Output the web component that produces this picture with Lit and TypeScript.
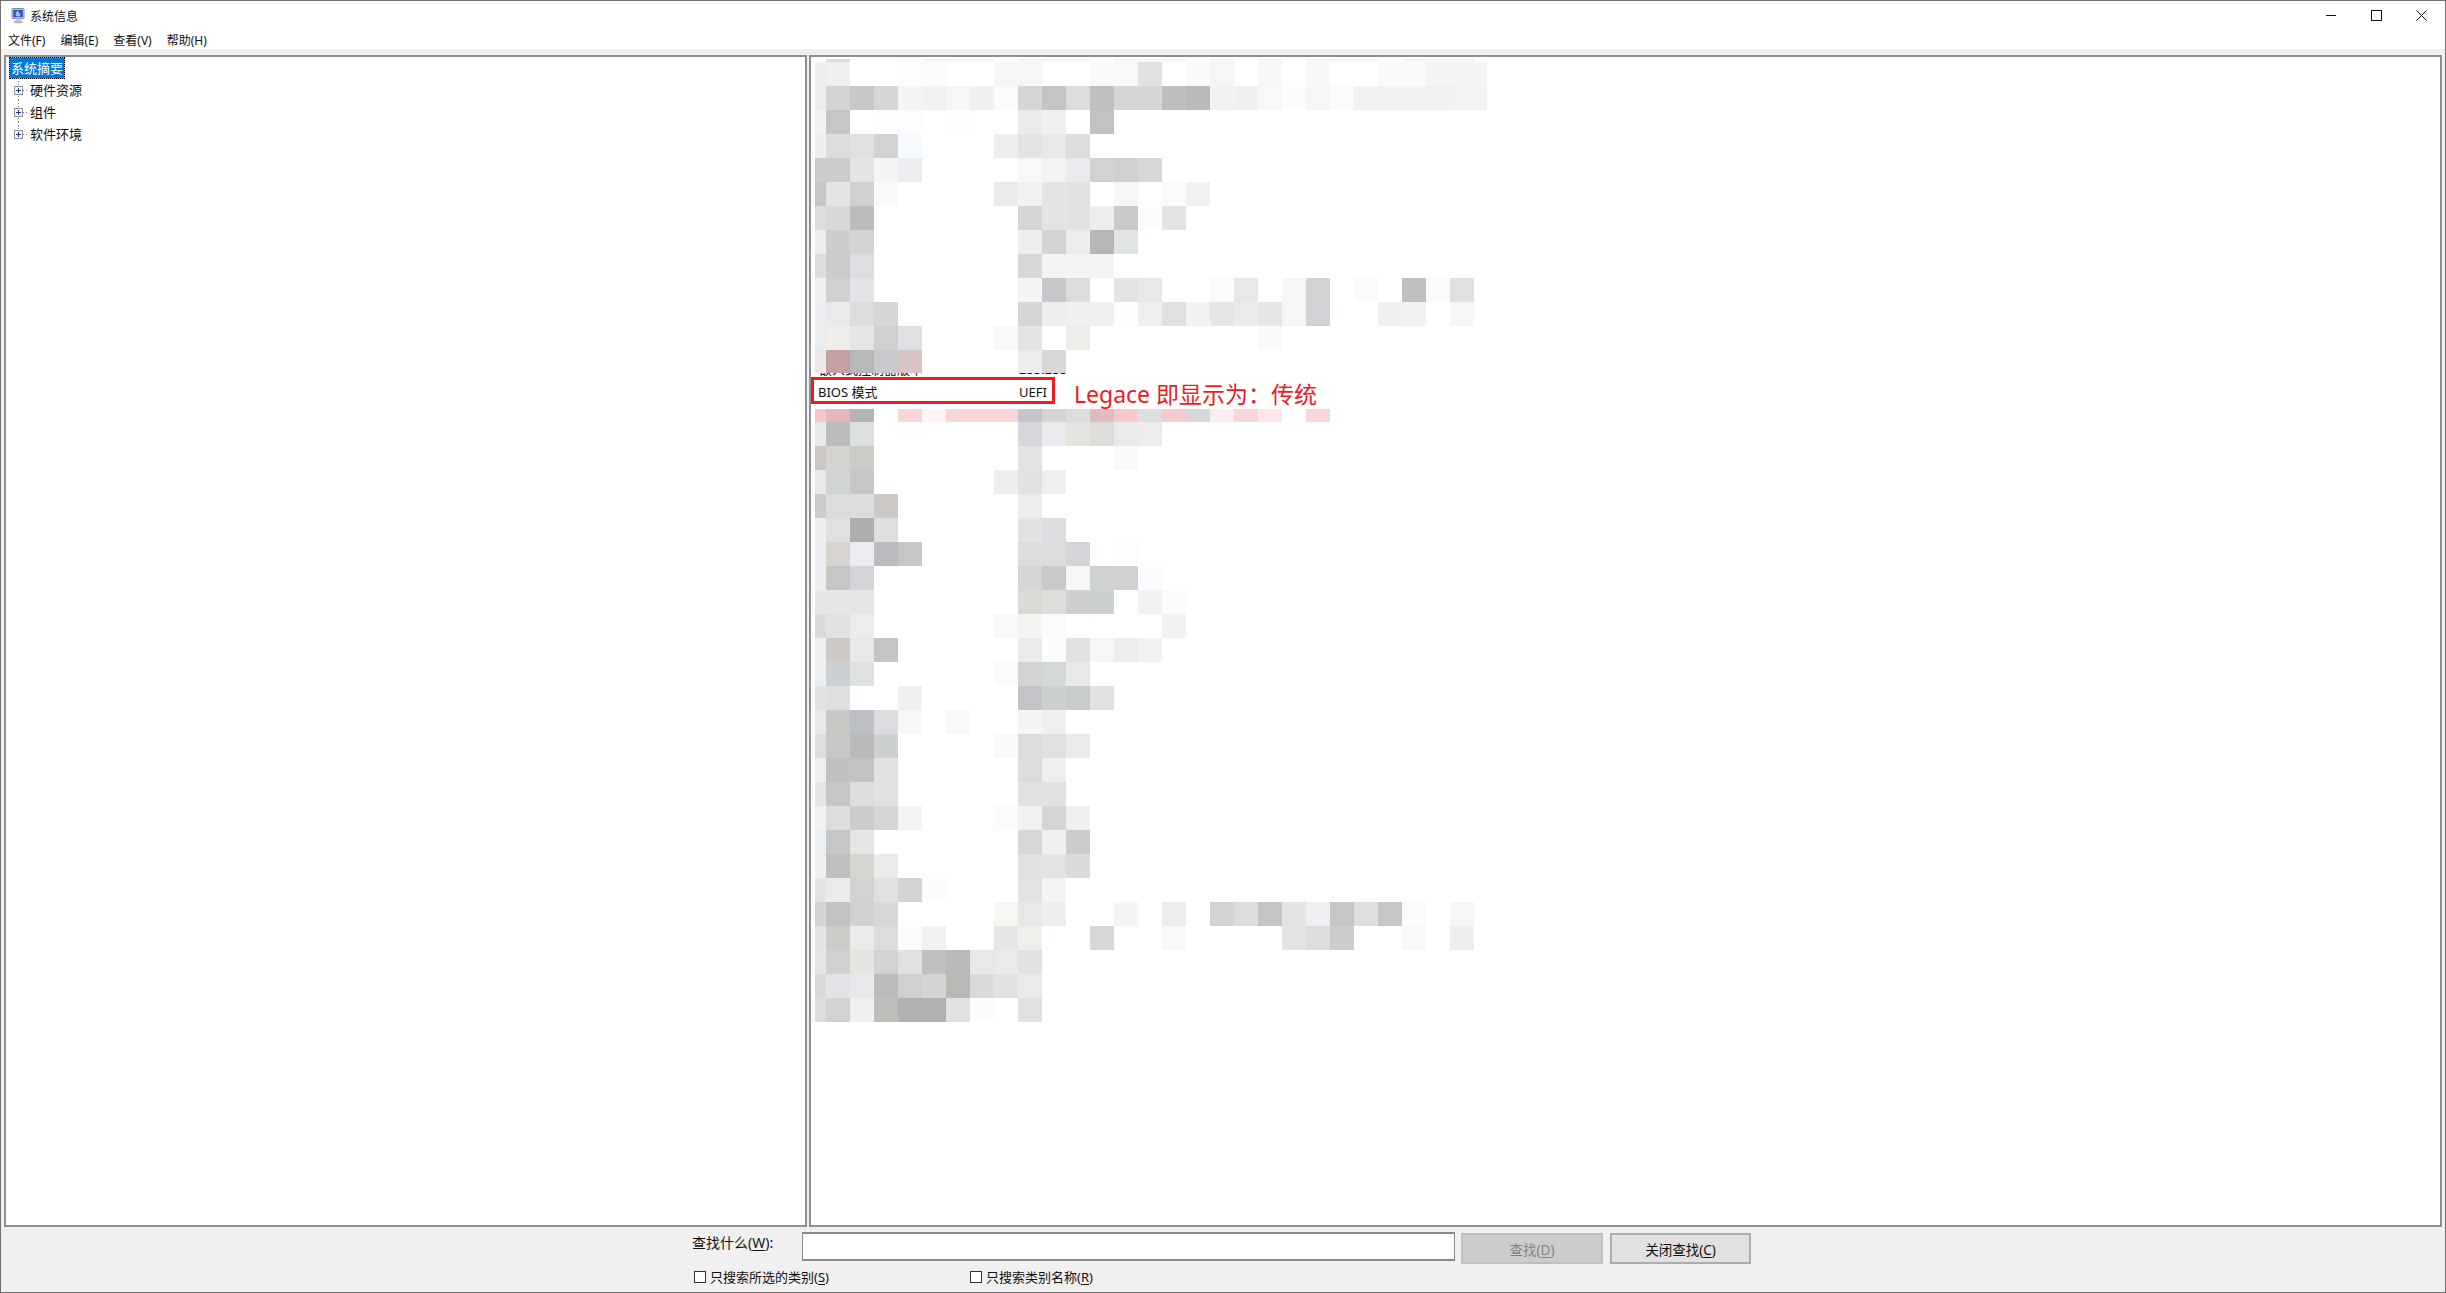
import { LitElement, html, css } from "lit";
import { customElement } from "lit/decorators.js";

const TOP_ROWS = [
  ". dcdce4 . . . f6 f6 f6 . f6 f6 f6 . f6 f6 f6 . f4 . f7 . f7 f6 f6 . f6 f6 f6 .",
  "ee f0 . . fd fc . . f6 f6 . . fa f8 e2 . fa f6 . f7 . f7 . . fa fa f5 f5 f5",
  "ec d4 c8 d6 f5 f2 f6 f0 fb d6 c4 dc c0 d6 d6 be ba f2 f0 f8 fc f6 fb f2 f2 f2 f2 f3 f3",
  "f2 c6 . fd fd . fe . . ea f0 . c2",
  "ee dc e0 d2 f6f9fd . . . ee e4 e8 dc",
  "cc cc e4 f5 ebedf0 . . . . f8 f3 e8eaed d2 d0 d8",
  "c6 e4 d0 fa . . . . ea f2 e4 e2 . f6 . fb f1",
  "dc d8 bc . . . . . . d6 e4 e2 ee ca fc e4",
  "ecedf0 cc d4 . . . . . . ee d4 ec b6 e0e4e4",
  "dc cc dedee2 . . . . . . d8 f4 f4 f4",
  "f0 d0 e2e4e8 . . . . . . f4 c8c6ca dc . e4 e8 . . fb e8 . f6 d2 . fb . c0 fb e0",
  "eceef2 ea dc d6 . . . . . d6 ee f0 f0 fd ef e0 f2 e6 ea e6 f6 d0d2d6 . . f0 f2 . f6",
  "eaecf0 f0eeec e6 d0 e0e0e4 . . . f8 e4 . eeece9 . . . . . . . fa",
  "ece8e8 c4a0a0 b8 c8c9cc d8c4c4 . . . . ec d8",
];

const BAND_ROW =
  "f4c8cc e4b8bc b4b4b6 . f9d4d8 fef5f6 f9d4d8 f9d4d8 f9d4d8 c6c6ca d4d4d2 dc e0bcc0 f8c8cc dcdee0 f4ccd0 d8d8d6 fceeee f9d4d8 fce8ea . f9d4d8";

const BOTTOM_ROWS = [
  "e8 bc dce0de . . . . . . d8d8dc e8eaee e4e4e0 dcdcd8 ea ec",
  "ccc8c8 d6d4d0 cccbc8 . . . . . . e6e4e2 . . . f9",
  "e8eae8 d0d4d2 c6 . . . . . f0eeec e4e2e0 eef0ef",
  "cc dc dc ccc9c6 . . . . . ec",
  "ee e0 acaeb0 dcdee0 . . . . . e2 dcdde0",
  "eceef2 d8d4d0 eaecf0 bcbcc0 c6 . . . . dc dcdcda d4d5d8 . fd",
  "eceef2 c6 d4d5d8 . . . . . . d6 ccc9cc f6 cfd0d2 d0d1d3 fbfcff",
  "e6e6e4 e6 e4e6e8 . . . . . . dad9d6 deddd9 d0ced0 ccd0d0 . f2f2f0 fbfcfb",
  "dcdad6 e0e2e4 ec . . . . . f8 f3f3f1 fb . . . . f2",
  "eef0f2 ccc9c6 e6e8ea c4 . . . . . ea fbfdfc e2 f6 edecea f2",
  "ecf0f3 ccd0d2 dee0e2 . . . . . fb d4 d4d8d8 e8",
  "e2 e0dee0 . . f0 . . . . c4c4c8 ccd0ce c8cccc e2",
  "e8eae8 c8c8c4 bcc0c4 dcdce0 f6f8f7 . f8f8fa . . f6f5f3 f0efed",
  "e0dedc c6c8ca bcbab8 ccd0ce . . . . f9 dc e0 eaeae8",
  "ecf0f3 c0 c4c2c0 e2 . . . . . dc f0efed",
  "e6 c6c6c4 dcdedc e4e2e0 . . . . . e4e2e0 e2",
  "f4f2ee dc cc d6 f2f4f3 . . . fcfafa f2 d4d6d6 f0",
  "ecf0f3 c4c6c8 e6e4e4 . . . . . . d6d8da f0 ccccce",
  "f0 c0bec0 d6d6d0 ea . . . . . e2e2e4 e2e4e4 dadcdc",
  "e6e4e2 eaecea d2d2d0 e0e0de d4 fc . . . e4e2e4 f4",
  "d4 c2c2c4 d0d0ce d8 . . . . f8f6f3 eae8e6 ee . . f4f6f5 . ec . d2d4d4 dcdcda c4 e4 eeeff2 c6c6c4 dee0e0 c8c6c4 fbfbf9 . f5f7f6",
  "e4 ccccc8 eaeae8 dc fbfdfc f2 . . e4e6e8 f0efec . . d8 . . f8 . . . . e4e4e2 dedcda ccccca . . f8 . eeeeef",
  "e2e6e6 d0 e6e4e0 d2 e0 bebfc0 b8bab8 e8 e8eaec e2",
  "d8dad8 e2e4e8 e6e8ea bcbabc d0 d4 b8b8b4 dadadc e4e2e0 eceae8",
  "dcdeda d2 f0 bcbeba b2b0b0 b2b0b0 e2e2e4 fc . e0",
];

const NOTE = "Legace 即显示为\uFF1A传统";

const colour = (t: string) =>
  t === "." ? "#ffffff" : t.length === 2 ? `#${t}${t}${t}` : `#${t}`;

const TREE = [
  { label: "硬件资源", last: false },
  { label: "组件", last: false },
  { label: "软件环境", last: true },
];

@customElement("app-root")
export class AppRoot extends LitElement {
  static styles = css`
    :host {
      display: block;
      width: 2446px;
      height: 1293px;
      font-family: "Noto Sans", "Noto Sans CJK SC", sans-serif;
      font-size: 13px;
      color: #111;
    }
    .window {
      box-sizing: border-box;
      width: 100%;
      height: 100%;
      display: flex;
      flex-direction: column;
      border: 1px solid #707070;
      background: #f0f0f0;
    }
    .title {
      height: 29px;
      background: #fff;
      display: flex;
      align-items: center;
      font-size: 12px;
      padding-left: 9px;
      gap: 4px;
    }
    .title .name { flex: 1; }
    .controls { display: flex; align-items: center; padding-right: 1px; }
    .controls svg { display: block; width: 45px; height: 29px; }
    .menu {
      height: 19px;
      background: #fff;
      display: flex;
      align-items: center;
      font-size: 12px;
      padding-left: 7px;
      gap: 15px;
    }
    .panes {
      flex: 1;
      min-height: 0;
      display: flex;
      padding: 6px 3px 0 3px;
      gap: 2px;
    }
    .pane {
      box-sizing: border-box;
      background: #fff;
      border: 2px solid #8e8f96;
    }
    .left { width: 803px; }
    .right { flex: 1; padding: 2px 0 0 4px; min-width: 0; }
    .selected {
      display: inline-block;
      margin-left: 3px;
      border: 1px dotted #000;
      background: #f79a1f;
      line-height: 0;
    }
    .selected span {
      display: inline-block;
      background: #0078d7;
      color: #fff;
      line-height: 20px;
      padding: 0 1px;
    }
    .tree { list-style: none; margin: -1px 0 0 0; padding: 0; }
    .tree li {
      height: 22px;
      display: flex;
      align-items: center;
      font-size: 13px;
    }
    .tree svg { display: block; width: 24px; height: 22px; flex: none; }
    .mosaic {
      display: grid;
      grid-template-columns: 11px repeat(27, 24px) 13px;
      justify-content: start;
    }
    .mosaic.head { grid-template-rows: 3px repeat(12, 24px) 23px; }
    .mosaic.band { grid-template-rows: 13px; margin-top: 5px; }
    .mosaic.tail { grid-auto-rows: 24px; }
    .sliver {
      height: 3px;
      overflow: hidden;
      display: flex;
      align-items: flex-end;
      padding-left: 4px;
      line-height: 14px;
      margin-bottom: 1px;
    }
    .sliver .k { width: 200px; flex: none; }
    .sliver span { display: block; height: 14px; flex: none; }
    .noted { display: flex; align-items: flex-start; height: 27px; margin-left: -4px; position: relative; }
    .box {
      box-sizing: border-box;
      width: 244px;
      height: 27px;
      border: 3px solid #ed1c24;
      display: flex;
      align-items: center;
      padding: 2px 0 0 4px;
    }
    .box .k { width: 201px; flex: none; }
    .note {
      margin: -1px 0 0 19px;
      font-size: 23px;
      line-height: 36px;
      color: #ed1c24;
      white-space: nowrap;
    }
    .find {
      height: 65px;
      flex: none;
      box-sizing: border-box;
      padding: 5px 0 0 691px;
    }
    .find-row { display: flex; align-items: flex-start; }
    .find-label { width: 110px; font-size: 14px; line-height: 22px; }
    u { text-underline-offset: 2px; }
    .find-input {
      box-sizing: border-box;
      width: 653px;
      height: 29px;
      background: #fff;
      border: 1px solid #8a8a8a;
      border-width: 2px 1px;
      margin: 0 6px 0 0;
      padding: 0;
      outline: none;
    }
    .btn {
      box-sizing: border-box;
      height: 31px;
      margin: 1px 0 0 0;
      padding: 0;
      font: inherit;
      font-size: 13.5px;
      color: #111;
      background: #e1e1e1;
      border: 2px solid #adadad;
    }
    .btn.find-btn { width: 142px; margin-right: 7px; }
    .btn.close-btn { width: 141px; }
    .btn:disabled { background: #cccccc; border-color: #bfbfbf; color: #848484; }
    .checks {
      display: grid;
      grid-template-columns: 276px auto;
      justify-content: start;
      margin: 5px 0 0 2px;
    }
    .check { display: flex; align-items: center; gap: 4px; line-height: 16px; }
    .check input {
      appearance: none;
      box-sizing: border-box;
      width: 12px;
      height: 12px;
      margin: 0;
      background: #fff;
      border: 1px solid #333;
    }
  `;

  private cells(row: string) {
    return row
      .split(" ")
      .map((t) => html`<div style="background:${colour(t)}"></div>`);
  }

  private mosaic(cls: string, rows: string[]) {
    return html`<div class="mosaic ${cls}">
      ${rows.map((r) => {
        const n = r.split(" ").length;
        return html`${this.cells(r)}${n < 29
          ? html`<div style="grid-column:${n + 1} / -1"></div>`
          : ""}`;
      })}
    </div>`;
  }

  private treeIcon(last: boolean) {
    return html`<svg viewBox="0 0 24 22">
      <path d="M12.5 0V${last ? 8 : 22}M17 12.5H23" stroke="#777" stroke-width="1" stroke-dasharray="1 2" fill="none"></path>
      <rect x="8.5" y="8.5" width="8" height="8" fill="#f4f4f6" stroke="#8f9296"></rect>
      <path d="M10 12.5H15M12.5 10V15" stroke="#1f3a7a" stroke-width="1" fill="none"></path>
    </svg>`;
  }

  render() {
    return html`<div class="window">
      <div class="title">
        <svg width="16" height="16" viewBox="0 0 16 16">
          <rect x="2" y="0.5" width="12" height="10" rx="1" fill="#d5d9e4" stroke="#7c86a5"></rect>
          <rect x="3.2" y="1.8" width="9.6" height="7.4" fill="#2a52c8"></rect>
          <path d="M6 8C5 5 7 3 8.5 2.5L9 6 11 5 9.500 8.800Z" fill="#9ec0f2"></path>
          <path d="M6.500 10.500H10L11 13H5.500Z" fill="#c8ccd2"></path>
          <ellipse cx="8.300" cy="14" rx="4.800" ry="1.400" fill="#b4b8bc"></ellipse>
        </svg>
        <span class="name">系统信息</span>
        <div class="controls">
          <svg viewBox="0 0 45 29"><path d="M17 14.500H27" stroke="#111" fill="none"></path></svg>
          <svg viewBox="0 0 45 29"><rect x="17.500" y="9.500" width="10" height="10" stroke="#111" fill="none"></rect></svg>
          <svg viewBox="0 0 45 29"><path d="M17.500 9.500L27.500 19.500M27.500 9.500L17.500 19.500" stroke="#111" fill="none"></path></svg>
        </div>
      </div>
      <div class="menu">
        <span>文件(F)</span><span>编辑(E)</span><span>查看(V)</span><span>帮助(H)</span>
      </div>
      <div class="panes">
        <div class="pane left">
          <div class="selected"><span>系统摘要</span></div>
          <ul class="tree">
            ${TREE.map(
              (t) => html`<li>${this.treeIcon(t.last)}<span>${t.label}</span></li>`
            )}
          </ul>
        </div>
        <div class="pane right">
          ${this.mosaic("head", TOP_ROWS)}
          <div class="sliver"><span class="k">嵌入式控制器版本</span><span>255.255</span></div>
          <div class="noted">
            <div class="box"><span class="k">BIOS 模式</span><span>UEFI</span></div>
            <div class="note">${NOTE}</div>
          </div>
          ${this.mosaic("band", [BAND_ROW])}
          ${this.mosaic("tail", BOTTOM_ROWS)}
        </div>
      </div>
      <div class="find">
        <div class="find-row">
          <label class="find-label">查找什么(<u>W</u>):</label>
          <input class="find-input" type="text" />
          <button class="btn find-btn" disabled>查找(<u>D</u>)</button>
          <button class="btn close-btn">关闭查找(<u>C</u>)</button>
        </div>
        <div class="checks">
          <label class="check"><input type="checkbox" /><span>只搜索所选的类别(<u>S</u>)</span></label>
          <label class="check"><input type="checkbox" /><span>只搜索类别名称(<u>R</u>)</span></label>
        </div>
      </div>
    </div>`;
  }
}
